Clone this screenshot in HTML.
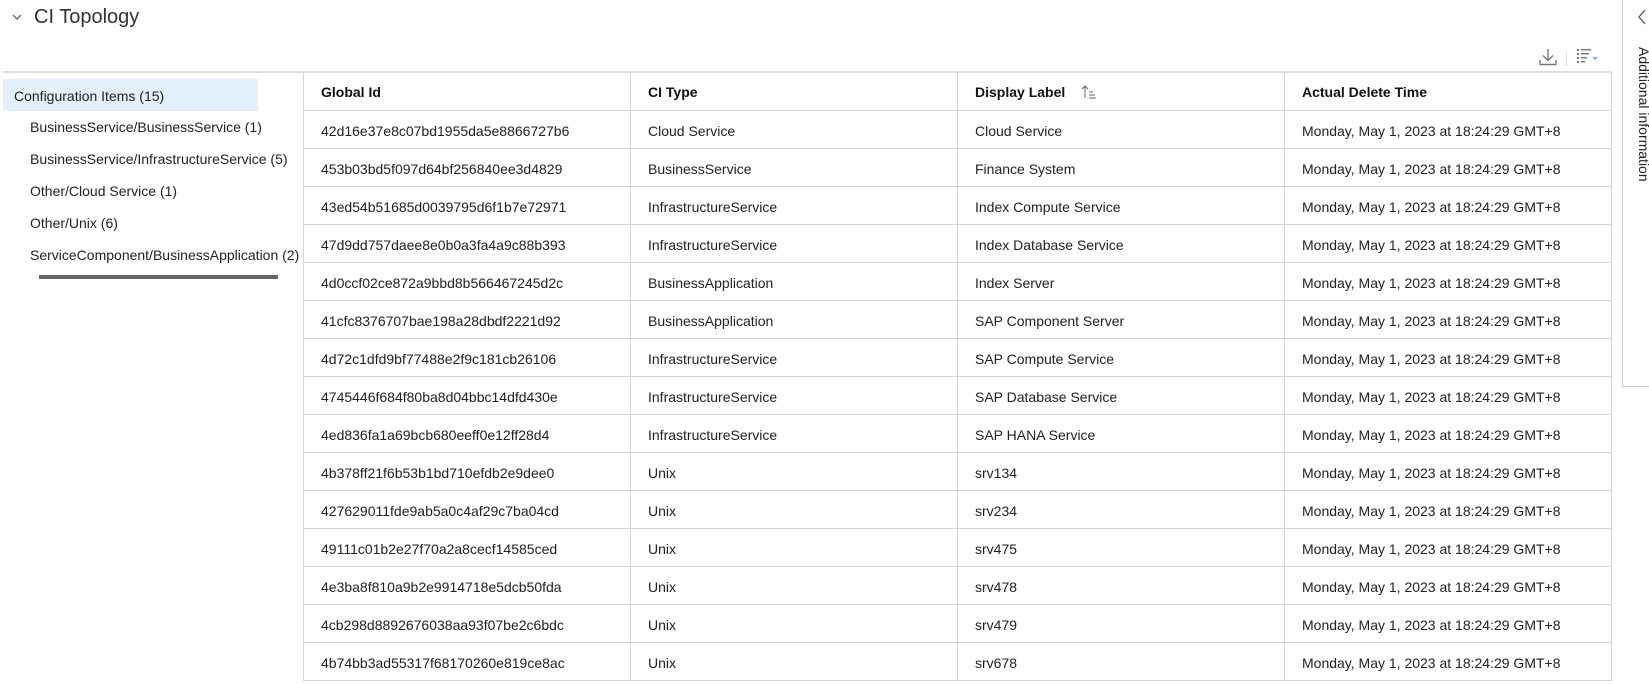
<!DOCTYPE html>
<html><head><meta charset="utf-8"><style>
*{margin:0;padding:0;box-sizing:border-box}
body{width:1649px;height:684px;overflow:hidden;background:#fff;font-family:"Liberation Sans",sans-serif;color:#222;position:relative}
.title{position:absolute;left:34px;top:6px;font-size:20px;color:#333}
.chev{position:absolute;left:11px;top:12px}
.topline{position:absolute;left:3px;top:71px;width:1609px;height:2px;background:#ddd}
.sel{position:absolute;left:3px;top:79px;width:255px;height:32px;background:#e3effb}
.item{position:absolute;font-size:14px;color:#222;white-space:nowrap}
.bar{position:absolute;left:39px;top:275px;width:239px;height:4px;background:#666}
table{position:absolute;left:303px;top:72px;width:1309px;border-collapse:collapse;table-layout:fixed;font-size:14px}
td,th{height:38px;border:1px solid #d4d4d4;padding:3px 0 0 17px;text-align:left;white-space:nowrap;overflow:hidden}
th{font-weight:bold;color:#111;border-top:none}
.panel{position:absolute;left:1622px;top:-1px;width:40px;height:388px;border:1px solid #ccc;border-right:none}
.vt{position:absolute;left:1632px;top:47px;transform-origin:0 0;transform:translate(20px,0) rotate(90deg);font-size:14px;white-space:nowrap;color:#222}
</style></head><body>
<svg class="chev" width="12" height="10" viewBox="0 0 12 10"><path d="M2 3 L6 7 L10 3" fill="none" stroke="#555" stroke-width="1.2"/></svg>
<div class="title">CI Topology</div>
<svg style="position:absolute;left:1538px;top:48px" width="20" height="18" viewBox="0 0 20 18"><path d="M10 1 V12 M5 7.5 L10 12.5 L15 7.5 M2 12 V16.5 H18 V12" fill="none" stroke="#777" stroke-width="1.4"/></svg>
<div style="position:absolute;left:1566px;top:52px;width:1px;height:14px;background:#ddd"></div>
<svg style="position:absolute;left:1576px;top:48px" width="26" height="16" viewBox="0 0 26 16"><g fill="#777"><rect x="1" y="1" width="2" height="2"/><rect x="1" y="5" width="2" height="2"/><rect x="1" y="9" width="2" height="2"/><rect x="1" y="13" width="2" height="2"/><rect x="5" y="1" width="10" height="1.4"/><rect x="5" y="5" width="8" height="1.4"/><rect x="5" y="9" width="6" height="1.4"/><rect x="5" y="13" width="4" height="1.4"/></g><path d="M17 9 L19 11 L21 9" fill="none" stroke="#3a8ee6" stroke-width="1"/></svg>
<div class="topline"></div>
<div class="sel"></div>
<div class="item" style="left:14px;top:88px">Configuration Items (15)</div>
<div class="item" style="left:30px;top:119px">BusinessService/BusinessService (1)</div>
<div class="item" style="left:30px;top:151px">BusinessService/InfrastructureService (5)</div>
<div class="item" style="left:30px;top:183px">Other/Cloud Service (1)</div>
<div class="item" style="left:30px;top:215px">Other/Unix (6)</div>
<div class="item" style="left:30px;top:247px">ServiceComponent/BusinessApplication (2)</div>
<div class="bar"></div>
<table>
<tr><th>Global Id</th><th>CI Type</th><th>Display Label <svg width="16" height="14" viewBox="0 0 16 14" style="vertical-align:-2px;margin-left:12px"><path d="M4 13 V1 M1 4 L4 1 L7 4 M8 7 H12 M8 10 H14 M8 13 H15" fill="none" stroke="#666" stroke-width="1"/></svg></th><th>Actual Delete Time</th></tr>
<tr><td>42d16e37e8c07bd1955da5e8866727b6</td><td>Cloud Service</td><td>Cloud Service</td><td>Monday, May 1, 2023 at 18:24:29 GMT+8</td></tr>
<tr><td>453b03bd5f097d64bf256840ee3d4829</td><td>BusinessService</td><td>Finance System</td><td>Monday, May 1, 2023 at 18:24:29 GMT+8</td></tr>
<tr><td>43ed54b51685d0039795d6f1b7e72971</td><td>InfrastructureService</td><td>Index Compute Service</td><td>Monday, May 1, 2023 at 18:24:29 GMT+8</td></tr>
<tr><td>47d9dd757daee8e0b0a3fa4a9c88b393</td><td>InfrastructureService</td><td>Index Database Service</td><td>Monday, May 1, 2023 at 18:24:29 GMT+8</td></tr>
<tr><td>4d0ccf02ce872a9bbd8b566467245d2c</td><td>BusinessApplication</td><td>Index Server</td><td>Monday, May 1, 2023 at 18:24:29 GMT+8</td></tr>
<tr><td>41cfc8376707bae198a28dbdf2221d92</td><td>BusinessApplication</td><td>SAP Component Server</td><td>Monday, May 1, 2023 at 18:24:29 GMT+8</td></tr>
<tr><td>4d72c1dfd9bf77488e2f9c181cb26106</td><td>InfrastructureService</td><td>SAP Compute Service</td><td>Monday, May 1, 2023 at 18:24:29 GMT+8</td></tr>
<tr><td>4745446f684f80ba8d04bbc14dfd430e</td><td>InfrastructureService</td><td>SAP Database Service</td><td>Monday, May 1, 2023 at 18:24:29 GMT+8</td></tr>
<tr><td>4ed836fa1a69bcb680eeff0e12ff28d4</td><td>InfrastructureService</td><td>SAP HANA Service</td><td>Monday, May 1, 2023 at 18:24:29 GMT+8</td></tr>
<tr><td>4b378ff21f6b53b1bd710efdb2e9dee0</td><td>Unix</td><td>srv134</td><td>Monday, May 1, 2023 at 18:24:29 GMT+8</td></tr>
<tr><td>427629011fde9ab5a0c4af29c7ba04cd</td><td>Unix</td><td>srv234</td><td>Monday, May 1, 2023 at 18:24:29 GMT+8</td></tr>
<tr><td>49111c01b2e27f70a2a8cecf14585ced</td><td>Unix</td><td>srv475</td><td>Monday, May 1, 2023 at 18:24:29 GMT+8</td></tr>
<tr><td>4e3ba8f810a9b2e9914718e5dcb50fda</td><td>Unix</td><td>srv478</td><td>Monday, May 1, 2023 at 18:24:29 GMT+8</td></tr>
<tr><td>4cb298d8892676038aa93f07be2c6bdc</td><td>Unix</td><td>srv479</td><td>Monday, May 1, 2023 at 18:24:29 GMT+8</td></tr>
<tr><td>4b74bb3ad55317f68170260e819ce8ac</td><td>Unix</td><td>srv678</td><td>Monday, May 1, 2023 at 18:24:29 GMT+8</td></tr>
</table>
<div class="panel"></div>
<svg style="position:absolute;left:1637px;top:8px" width="10" height="18" viewBox="0 0 10 18"><path d="M8 2 L2 9 L8 16" fill="none" stroke="#555" stroke-width="1.3"/></svg>
<div class="vt">Additional information</div>
</body></html>
